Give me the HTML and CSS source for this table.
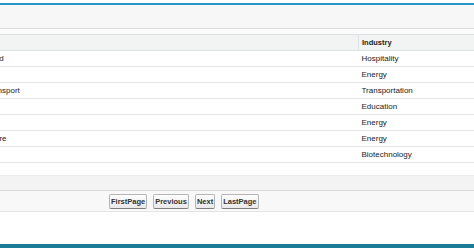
FILE: index.html
```html
<!DOCTYPE html>
<html>
<head>
<meta charset="utf-8">
<link rel="stylesheet" href="styles.css">
</head>
<body>
<div class="page">
  <div class="topline"></div>
  <div class="band"></div>
  <div class="spacer"></div>
  <div class="tablewrap">
    <table class="list">
      <thead>
        <tr><th class="name">Account Name</th><th class="ind">Industry</th></tr>
      </thead>
      <tbody>
        <tr><td class="name">Grand Hotels &amp; Resorts Ltd</td><td class="ind">Hospitality</td></tr>
        <tr><td class="name">United Oil &amp; Gas Corp.</td><td class="ind">Energy</td></tr>
        <tr><td class="name">Express Logistics and Transport</td><td class="ind">Transportation</td></tr>
        <tr><td class="name">University of Arizona</td><td class="ind">Education</td></tr>
        <tr><td class="name">United Oil &amp; Gas, UK</td><td class="ind">Energy</td></tr>
        <tr><td class="name">United Oil &amp; Gas, Singapore</td><td class="ind">Energy</td></tr>
        <tr><td class="name">GenePoint</td><td class="ind">Biotechnology</td></tr>
      </tbody>
    </table>
  </div>
  <div class="gap"></div>
  <div class="footband"></div>
  <div class="pager">
    <button class="btn">FirstPage</button>
    <button class="btn">Previous</button>
    <button class="btn">Next</button>
    <button class="btn">LastPage</button>
  </div>
  <div class="bottomspace"></div>
  <div class="bottombar"></div>
</div>
</body>
</html>
```

FILE: styles.css
```css
html, body {
  margin: 0;
  padding: 0;
  background: #ffffff;
  overflow: hidden;
}
.page {
  width: 474px;
  height: 248px;
  overflow: hidden;
  font-family: "Liberation Sans", Arial, sans-serif;
  color: #222;
  display: flex;
  flex-direction: column;
  padding-top: 3px;
  box-sizing: border-box;
}
.topline {
  height: 2px;
  background: #2a96c6;
  flex: none;
}
.band {
  height: 23px;
  background: #f8f7f7;
  border-bottom: 1px solid #dcdcdc;
  flex: none;
}
.spacer {
  height: 5px;
  background: #fbfbfb;
  flex: none;
}
.tablewrap {
  margin-left: -98px;
  width: 700px;
  flex: none;
}
.list {
  border-collapse: collapse;
  table-layout: fixed;
  width: 700px;
}
.list th, .list td {
  padding: 0;
  height: 15px;
  line-height: 15px;
  white-space: nowrap;
  overflow: hidden;
  text-align: left;
}
.list th {
  background: #f2f3f3;
  border-top: 1px solid #e0e3e5;
  border-bottom: 1px solid #e0e3e5;
  font-size: 7.5px;
  font-weight: bold;
  color: #222;
}
.list td {
  font-size: 8px;
  border-bottom: 1px solid #e6e6e6;
  background: #fff;
}
.list .name {
  width: 452px;
  padding-left: 4px;
}
.list .ind {
  padding-left: 3px;
}
.list th.ind {
  border-left: 1px solid #e0e3e5;
}
.gap {
  height: 12px;
  flex: none;
}
.footband {
  height: 14px;
  background: #f3f3f3;
  border-top: 1px solid #ececec;
  border-bottom: 1px solid #d8d8d8;
  flex: none;
}
.pager {
  height: 21px;
  background: #f8f8f8;
  border-bottom: 1px solid #e4e4e4;
  display: flex;
  align-items: flex-start;
  gap: 6px;
  padding-left: 109px;
  padding-top: 3px;
  box-sizing: border-box;
  flex: none;
}
.btn {
  font-family: "Liberation Sans", Arial, sans-serif;
  font-size: 7.5px;
  font-weight: bold;
  color: #333;
  height: 15px;
  padding: 0 1px;
  margin: 0;
  border: 1px solid #b5b5b5;
  border-bottom-color: #7f7f7f;
  border-radius: 2px;
  background: linear-gradient(#fdfdfd, #e9e9e9);
  line-height: 13px;
}
.bottomspace {
  flex: 1;
}
.bottombar {
  height: 4px;
  background: #1b7d96;
  flex: none;
}
```
